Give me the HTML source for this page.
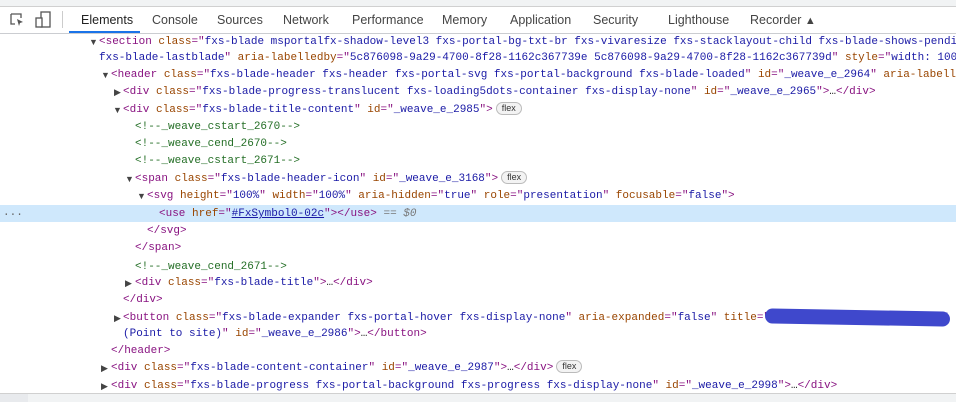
<!DOCTYPE html>
<html><head><style>
body{margin:0;width:956px;height:401px;overflow:hidden;background:#fff;font-family:"Liberation Sans",sans-serif;position:relative}
.top{position:absolute;left:0;top:0;width:956px;height:6px;background:#f1f3f4;border-bottom:1px solid #d0d0d0}
.tb{position:absolute;left:0;top:7px;width:956px;height:26px;background:#fff;border-bottom:1px solid #cbcdd1}
.tab{position:absolute;top:6px;font-size:12.5px;color:#444}
.l{position:absolute;height:16px;line-height:16px;font-family:"Liberation Mono",monospace;font-size:11px;white-space:pre;color:#222}
.t{color:#881280}.a{color:#994500}.v{color:#1a1aa6}.c{color:#236e25}
.tri{position:absolute;font-size:9px;color:#444;line-height:16px}
.b{display:inline-block;border:1px solid #bbb;border-radius:8px;font-size:9px;line-height:11px;padding:0 5px;color:#333;background:#f3f3f3;font-family:"Liberation Sans",sans-serif;vertical-align:1px;margin-left:3px}
.bot{position:absolute;left:0;top:393px;width:956px;height:8px;background:#f1f3f4;border-top:1px solid #d0d0d0}
</style></head><body>
<div class="top"></div>
<div class="tb">
<svg style="position:absolute;left:9px;top:5px" width="16" height="16"><path d="M2 2h10v4M2 2v10h4" stroke="#555" fill="none" stroke-width="1.3"/><path d="M8 7l6 3-3 1-1 3z" fill="#555"/></svg>
<svg style="position:absolute;left:35px;top:4px" width="16" height="18"><rect x="6" y="1" width="9" height="15" fill="none" stroke="#555" stroke-width="1.3"/><rect x="1" y="7" width="6" height="9" fill="#fff" stroke="#555" stroke-width="1.3"/></svg>
<div style="position:absolute;left:62px;top:4px;width:1px;height:17px;background:#ccc"></div>
<span class="tab" style="left:81px;color:#222">Elements</span>
<div style="position:absolute;left:69px;top:24px;width:71px;height:2px;background:#1a73e8"></div>
<span class="tab" style="left:152px">Console</span>
<span class="tab" style="left:217px">Sources</span>
<span class="tab" style="left:283px">Network</span>
<span class="tab" style="left:352px">Performance</span>
<span class="tab" style="left:442px">Memory</span>
<span class="tab" style="left:510px">Application</span>
<span class="tab" style="left:593px">Security</span>
<span class="tab" style="left:668px">Lighthouse</span>
<span class="tab" style="left:750px">Recorder <span style="font-size:11px">&#9650;</span></span>
</div>

<div style="position:absolute;left:0;top:205px;width:956px;height:17px;background:#cfe8fc"></div>
<div class="l" style="left:3px;top:205px;color:#666">...</div>

<span class="tri" style="left:89px;top:34px">&#9660;</span>
<div class="l" style="left:99px;top:34px"><span class="t">&lt;section</span> <span class="a">class</span><span class="t">="</span><span class="v">fxs-blade msportalfx-shadow-level3 fxs-portal-bg-txt-br fxs-vivaresize fxs-stacklayout-child fxs-blade-shows-pending</span></div>
<div class="l" style="left:99px;top:50px"><span class="v">fxs-blade-lastblade</span><span class="t">"</span> <span class="a">aria-labelledby</span><span class="t">="</span><span class="v">5c876098-9a29-4700-8f28-1162c367739e 5c876098-9a29-4700-8f28-1162c367739d</span><span class="t">"</span> <span class="a">style</span><span class="t">="</span><span class="v">width: 100</span></div>
<span class="tri" style="left:101px;top:67px">&#9660;</span>
<div class="l" style="left:111px;top:67px"><span class="t">&lt;header</span> <span class="a">class</span><span class="t">="</span><span class="v">fxs-blade-header fxs-header fxs-portal-svg fxs-portal-background fxs-blade-loaded</span><span class="t">"</span> <span class="a">id</span><span class="t">="</span><span class="v">_weave_e_2964</span><span class="t">"</span> <span class="a">aria-labelle</span></div>
<span class="tri" style="left:114px;top:84px">&#9654;</span>
<div class="l" style="left:123px;top:84px"><span class="t">&lt;div</span> <span class="a">class</span><span class="t">="</span><span class="v">fxs-blade-progress-translucent fxs-loading5dots-container fxs-display-none</span><span class="t">"</span> <span class="a">id</span><span class="t">="</span><span class="v">_weave_e_2965</span><span class="t">"&gt;</span>…<span class="t">&lt;/div&gt;</span></div>
<span class="tri" style="left:113px;top:102px">&#9660;</span>
<div class="l" style="left:123px;top:102px"><span class="t">&lt;div</span> <span class="a">class</span><span class="t">="</span><span class="v">fxs-blade-title-content</span><span class="t">"</span> <span class="a">id</span><span class="t">="</span><span class="v">_weave_e_2985</span><span class="t">"&gt;</span><span class="b">flex</span></div>
<div class="l c" style="left:135px;top:119px">&lt;!--_weave_cstart_2670--&gt;</div>
<div class="l c" style="left:135px;top:136px">&lt;!--_weave_cend_2670--&gt;</div>
<div class="l c" style="left:135px;top:153px">&lt;!--_weave_cstart_2671--&gt;</div>
<span class="tri" style="left:125px;top:171px">&#9660;</span>
<div class="l" style="left:135px;top:171px"><span class="t">&lt;span</span> <span class="a">class</span><span class="t">="</span><span class="v">fxs-blade-header-icon</span><span class="t">"</span> <span class="a">id</span><span class="t">="</span><span class="v">_weave_e_3168</span><span class="t">"&gt;</span><span class="b">flex</span></div>
<span class="tri" style="left:137px;top:188px">&#9660;</span>
<div class="l" style="left:147px;top:188px"><span class="t">&lt;svg</span> <span class="a">height</span><span class="t">="</span><span class="v">100%</span><span class="t">"</span> <span class="a">width</span><span class="t">="</span><span class="v">100%</span><span class="t">"</span> <span class="a">aria-hidden</span><span class="t">="</span><span class="v">true</span><span class="t">"</span> <span class="a">role</span><span class="t">="</span><span class="v">presentation</span><span class="t">"</span> <span class="a">focusable</span><span class="t">="</span><span class="v">false</span><span class="t">"&gt;</span></div>
<div class="l" style="left:159px;top:206px"><span class="t">&lt;use</span> <span class="a">href</span><span class="t">="</span><span class="v" style="text-decoration:underline">#FxSymbol0-02c</span><span class="t">"&gt;&lt;/use&gt;</span> <span style="color:#777">== <i>$0</i></span></div>
<div class="l t" style="left:147px;top:223px">&lt;/svg&gt;</div>
<div class="l t" style="left:135px;top:240px">&lt;/span&gt;</div>
<div class="l c" style="left:135px;top:259px">&lt;!--_weave_cend_2671--&gt;</div>
<span class="tri" style="left:125px;top:275px">&#9654;</span>
<div class="l" style="left:135px;top:275px"><span class="t">&lt;div</span> <span class="a">class</span><span class="t">="</span><span class="v">fxs-blade-title</span><span class="t">"&gt;</span>…<span class="t">&lt;/div&gt;</span></div>
<div class="l t" style="left:123px;top:292px">&lt;/div&gt;</div>
<span class="tri" style="left:114px;top:310px">&#9654;</span>
<div class="l" style="left:123px;top:310px"><span class="t">&lt;button</span> <span class="a">class</span><span class="t">="</span><span class="v">fxs-blade-expander fxs-portal-hover fxs-display-none</span><span class="t">"</span> <span class="a">aria-expanded</span><span class="t">="</span><span class="v">false</span><span class="t">"</span> <span class="a">title</span><span class="t">="</span><span class="v">                        'AN</span></div>
<div style="position:absolute;left:765px;top:310px;width:185px;height:15px;background:#3f48cc;border-radius:8px;transform:rotate(1deg)"></div>
<div class="l" style="left:123px;top:326px"><span class="v">(Point to site)</span><span class="t">"</span> <span class="a">id</span><span class="t">="</span><span class="v">_weave_e_2986</span><span class="t">"&gt;</span>…<span class="t">&lt;/button&gt;</span></div>
<div class="l t" style="left:111px;top:343px">&lt;/header&gt;</div>
<span class="tri" style="left:101px;top:360px">&#9654;</span>
<div class="l" style="left:111px;top:360px"><span class="t">&lt;div</span> <span class="a">class</span><span class="t">="</span><span class="v">fxs-blade-content-container</span><span class="t">"</span> <span class="a">id</span><span class="t">="</span><span class="v">_weave_e_2987</span><span class="t">"&gt;</span>…<span class="t">&lt;/div&gt;</span><span class="b">flex</span></div>
<span class="tri" style="left:101px;top:378px">&#9654;</span>
<div class="l" style="left:111px;top:378px"><span class="t">&lt;div</span> <span class="a">class</span><span class="t">="</span><span class="v">fxs-blade-progress fxs-portal-background fxs-progress fxs-display-none</span><span class="t">"</span> <span class="a">id</span><span class="t">="</span><span class="v">_weave_e_2998</span><span class="t">"&gt;</span>…<span class="t">&lt;/div&gt;</span></div>
<div class="bot"><div style="position:absolute;left:0;top:0;width:28px;height:8px;background:#e8eaed"></div></div>
</body></html>
